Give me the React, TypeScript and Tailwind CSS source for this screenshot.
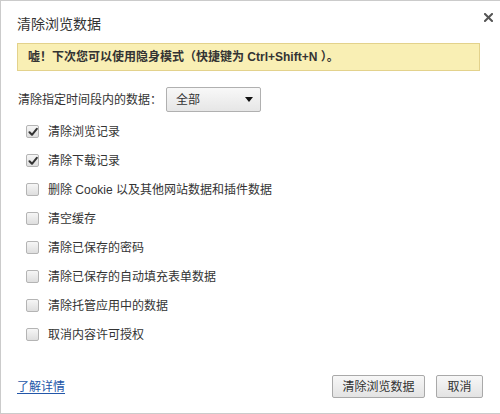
const options = [
  { label: '清除浏览记录', checked: true },
  { label: '清除下载记录', checked: true },
  { label: '删除 Cookie 以及其他网站数据和插件数据', checked: false },
  { label: '清空缓存', checked: false },
  { label: '清除已保存的密码', checked: false },
  { label: '清除已保存的自动填充表单数据', checked: false },
  { label: '清除托管应用中的数据', checked: false },
  { label: '取消内容许可授权', checked: false },
];

function Checkbox({ checked }: { checked: boolean }) {
  return (
    <span className="flex h-[13px] w-[13px] items-center justify-center rounded-[2px] border border-[#b4b4b4] bg-gradient-to-b from-[#f6f6f6] to-[#dedede]">
      {checked && (
        <svg width="10" height="10" viewBox="0 0 10 10">
          <path d="M1.5 5.2 L4 7.8 L8.8 1.8" fill="none" stroke="#333" strokeWidth="2" strokeLinecap="round" strokeLinejoin="round" />
        </svg>
      )}
    </span>
  );
}

export default function App() {
  return (
    <div
      className="flex h-[414px] w-[500px] flex-col border-b border-l border-t border-[#cbcbcb] bg-white text-[12px] text-[#333]"
      style={{ fontFamily: '"Liberation Sans", "Noto Sans CJK SC", sans-serif' }}
    >
      <div className="mt-[13px] flex h-[20px] items-center justify-between pl-[16px] pr-[5px]">
        <h1 className="text-[14px] font-normal text-[#333]">清除浏览数据</h1>
        <button className="-mt-[14px] flex h-[14px] w-[14px] items-center justify-center">
          <svg width="9" height="9" viewBox="0 0 9 9">
            <path d="M1 1 L8 8 M8 1 L1 8" stroke="#555" strokeWidth="2" strokeLinecap="square" />
          </svg>
        </button>
      </div>

      <div className="ml-[16px] mt-[9px] flex h-[28px] w-[463px] items-center border border-[#e3d28c] bg-[#f9efb4] pl-[10px] font-bold text-[#333]">
        嘘！下次您可以使用隐身模式（快捷键为 Ctrl+Shift+N ）。
      </div>

      <div className="ml-[17px] mt-[16px] flex items-center">
        <span>清除指定时间段内的数据：</span>
        <div className="ml-[4px] flex h-[25px] w-[95px] items-center justify-between rounded-[2px] border border-[#b0b0b0] bg-gradient-to-b from-[#f8f8f8] to-[#e6e6e6] pl-[9px] pr-[7px]">
          <span>全部</span>
          <svg width="8" height="5" viewBox="0 0 8 5">
            <path d="M0 0 H8 L4 5 Z" fill="#111" />
          </svg>
        </div>
      </div>

      <div className="mt-[5px] flex flex-col">
        {options.map((o, i) => (
          <label key={i} className="ml-[25px] flex h-[29px] items-center gap-[9px]">
            <Checkbox checked={o.checked} />
            <span>{o.label}</span>
          </label>
        ))}
      </div>

      <div className="mt-[26px] flex h-[23px] items-center justify-between pl-[16px] pr-[17px]">
        <a href="#" className="text-[#2356a8] underline underline-offset-2">了解详情</a>
        <div className="flex gap-[11px]">
          <button className="h-[23px] w-[93px] rounded-[2px] border border-[#a9a9a9] bg-gradient-to-b from-[#f7f7f7] to-[#e3e3e3] text-[12px] text-[#333]">
            清除浏览数据
          </button>
          <button className="h-[23px] w-[47px] rounded-[2px] border border-[#a9a9a9] bg-gradient-to-b from-[#f7f7f7] to-[#e3e3e3] text-[12px] text-[#333]">
            取消
          </button>
        </div>
      </div>
    </div>
  );
}
